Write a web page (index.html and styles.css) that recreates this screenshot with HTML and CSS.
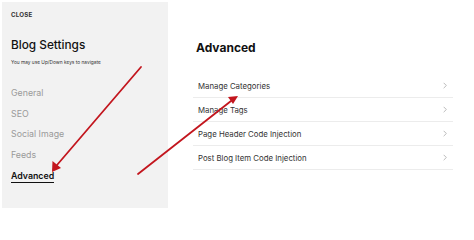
FILE: index.html
```html
<!DOCTYPE html>
<html>
<head>
<meta charset="utf-8">
<link rel="stylesheet" href="styles.css">
</head>
<body>
<div class="page">
  <aside class="sidebar">
    <div class="close">CLOSE</div>
    <h1 class="title">Blog Settings</h1>
    <p class="hint">You may use Up/Down keys to navigate</p>
    <nav class="nav">
      <div class="nav-item">General</div>
      <div class="nav-item">SEO</div>
      <div class="nav-item">Social Image</div>
      <div class="nav-item">Feeds</div>
      <div class="nav-item active"><span>Advanced</span></div>
    </nav>
  </aside>
  <main class="content">
    <h2 class="heading">Advanced</h2>
    <ul class="list">
      <li class="row"><span>Manage Categories</span><svg class="chev" viewBox="0 0 6 10"><path d="M1 1l4 4-4 4" fill="none" stroke="#9a9a9a" stroke-width="1"/></svg></li>
      <li class="row"><span>Manage Tags</span><svg class="chev" viewBox="0 0 6 10"><path d="M1 1l4 4-4 4" fill="none" stroke="#9a9a9a" stroke-width="1"/></svg></li>
      <li class="row"><span>Page Header Code Injection</span><svg class="chev" viewBox="0 0 6 10"><path d="M1 1l4 4-4 4" fill="none" stroke="#9a9a9a" stroke-width="1"/></svg></li>
      <li class="row"><span>Post Blog Item Code Injection</span><svg class="chev" viewBox="0 0 6 10"><path d="M1 1l4 4-4 4" fill="none" stroke="#9a9a9a" stroke-width="1"/></svg></li>
    </ul>
  </main>
  <svg class="arrows" width="474" height="212" viewBox="0 0 474 212">
    <g stroke="#c3161e" stroke-width="1.8" fill="#c3161e" stroke-linecap="round">
      <line x1="141" y1="67" x2="57" y2="165"/>
      <polygon points="52,172 52.5,161 61,168" stroke="none"/>
      <line x1="138" y1="174" x2="231" y2="101"/>
      <polygon points="238,96 228,97 233,104" stroke="none"/>
    </g>
  </svg>
</div>
</body>
</html>
```

FILE: styles.css
```css
html, body {
  margin: 0;
  padding: 0;
  background: #ffffff;
}
body {
  font-family: "Inter", "Liberation Sans", Arial, sans-serif;
  color: #1a1a1a;
}
.page {
  position: relative;
  width: 474px;
  height: 212px;
  display: flex;
  padding: 2px 0 0 2px;
  box-sizing: border-box;
}
.sidebar {
  width: 166px;
  height: 206px;
  background: #f2f2f2;
  padding: 0 0 0 9px;
  box-sizing: border-box;
}
.close {
  font-size: 6.2px;
  font-weight: 700;
  letter-spacing: 0.2px;
  color: #333;
  margin-top: 9px;
  line-height: 8px;
}
.title {
  font-size: 11.8px;
  font-weight: 500;
  margin: 19px 0 0 0;
  line-height: 15px;
  color: #111;
}
.hint {
  font-size: 4.8px;
  margin: 6px 0 0 0;
  line-height: 6px;
  color: #333;
}
.nav {
  margin-top: 18px;
}
.nav-item {
  font-size: 8.8px;
  line-height: 20.7px;
  color: #9a9a9a;
}
.nav-item.active span {
  color: #111;
  font-weight: 600;
  border-bottom: 1.5px solid #111;
  padding-bottom: 1px;
}
.content {
  flex: 1;
  padding: 0 0 0 25px;
}
.heading {
  font-size: 12px;
  font-weight: 700;
  margin: 38px 0 0 3px;
  line-height: 15px;
  color: #111;
}
.list {
  list-style: none;
  margin: 19px 0 0 0;
  padding: 0;
  width: 260px;
}
.row {
  height: 24px;
  box-sizing: border-box;
  border-bottom: 1px solid #ececec;
  display: flex;
  align-items: center;
  justify-content: space-between;
  padding: 0 5px 0 5px;
  font-size: 7.8px;
  color: #333;
}
.chev {
  width: 4px;
  height: 7px;
  margin-right: 1px;
}
.arrows {
  position: absolute;
  left: 0;
  top: 0;
  pointer-events: none;
}
```
